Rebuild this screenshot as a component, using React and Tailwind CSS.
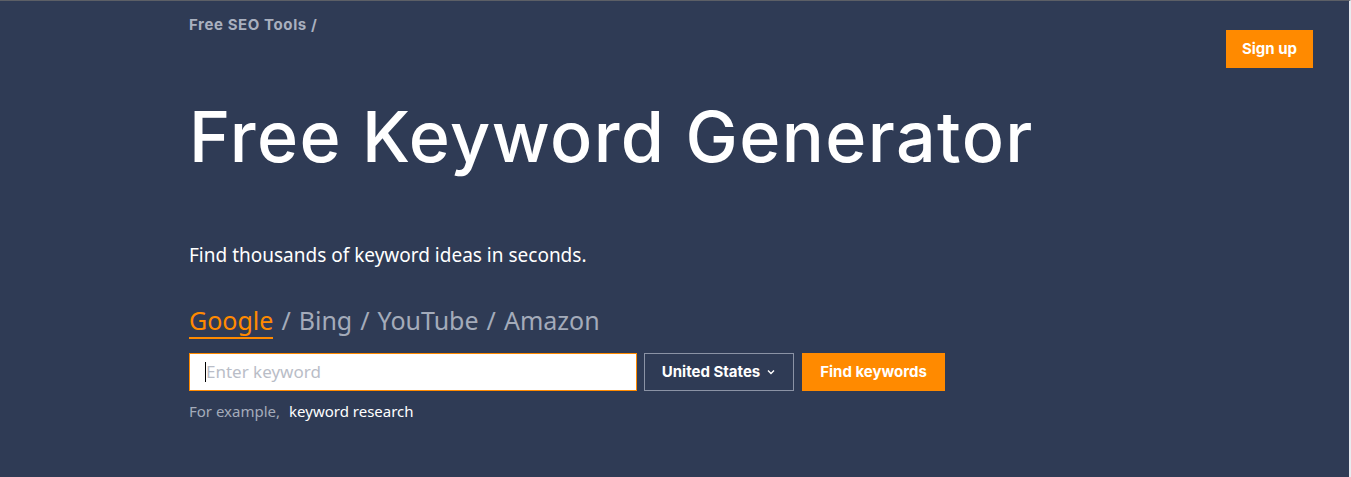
import React from "react";

const engines = ["Google", "Bing", "YouTube", "Amazon"];

const App = () => {
  return (
    <div className="w-full h-[477px] bg-[#2f3b55] border-t border-[#5c5f66] border-r-2 border-r-[#e9ebf0] overflow-hidden">
      <div className="flex justify-between pl-[189px] pr-[36px]">
        <div className="flex flex-col">
          <div className="pt-[16px] text-[15px] leading-[16px] font-bold tracking-[0.04em] text-[#a9b0bf] font-['Inter',sans-serif]">
            Free SEO Tools /
          </div>

          <h1 className="mt-[64px] text-[70px] leading-[80px] text-white font-['Inter',sans-serif] font-medium tracking-[0.02em] whitespace-nowrap">
            Free Keyword Generator
          </h1>

          <p className="mt-[65px] text-[19px] leading-[26px] text-white font-['Noto_Sans',sans-serif]">
            Find thousands of keyword ideas in seconds.
          </p>

          <div className="mt-[36px] flex items-start text-[25px] leading-[32px] font-['Noto_Sans',sans-serif] text-[#a4abba]">
            {engines.map((name, i) => (
              <React.Fragment key={name}>
                {i > 0 && <span className="px-[8px]">/</span>}
                {i === 0 ? (
                  <span className="text-[#ff8a00] border-b-2 border-[#ff8a00] pb-[1px]">{name}</span>
                ) : (
                  <span>{name}</span>
                )}
              </React.Fragment>
            ))}
          </div>

          <div className="mt-[14px] flex items-stretch gap-[7px]">
            <div className="w-[448px] h-[38px] bg-white border border-[#ff8a00] flex items-center pl-[15px]">
              <span className="w-px h-[20px] bg-black" />
              <span className="text-[17px] text-[#b9bdc7] font-['Noto_Sans',sans-serif]">Enter keyword</span>
            </div>
            <div className="w-[150px] h-[38px] border border-[#8b93a5] flex items-center justify-center gap-[6px] text-white text-[15px] font-bold font-['Inter',sans-serif]">
              <span>United States</span>
              <svg width="10" height="10" viewBox="0 0 10 10" fill="none" stroke="white" strokeWidth="1.4">
                <path d="M2 3.5 L5 6.5 L8 3.5" />
              </svg>
            </div>
            <button className="w-[143px] h-[38px] ml-[1px] bg-[#ff8a00] text-white text-[15px] font-bold font-['Inter',sans-serif]">
              Find keywords
            </button>
          </div>

          <div className="mt-[10px] text-[15px] leading-[20px] font-['Noto_Sans',sans-serif]">
            <span className="text-[#a4abba]">For example,</span>
            <span className="ml-[9px] text-white">keyword research</span>
          </div>
        </div>

        <button className="mt-[29px] self-start w-[87px] h-[38px] bg-[#ff8a00] text-white text-[15px] font-bold font-['Inter',sans-serif]">
          Sign up
        </button>
      </div>
    </div>
  );
};

export default App;
